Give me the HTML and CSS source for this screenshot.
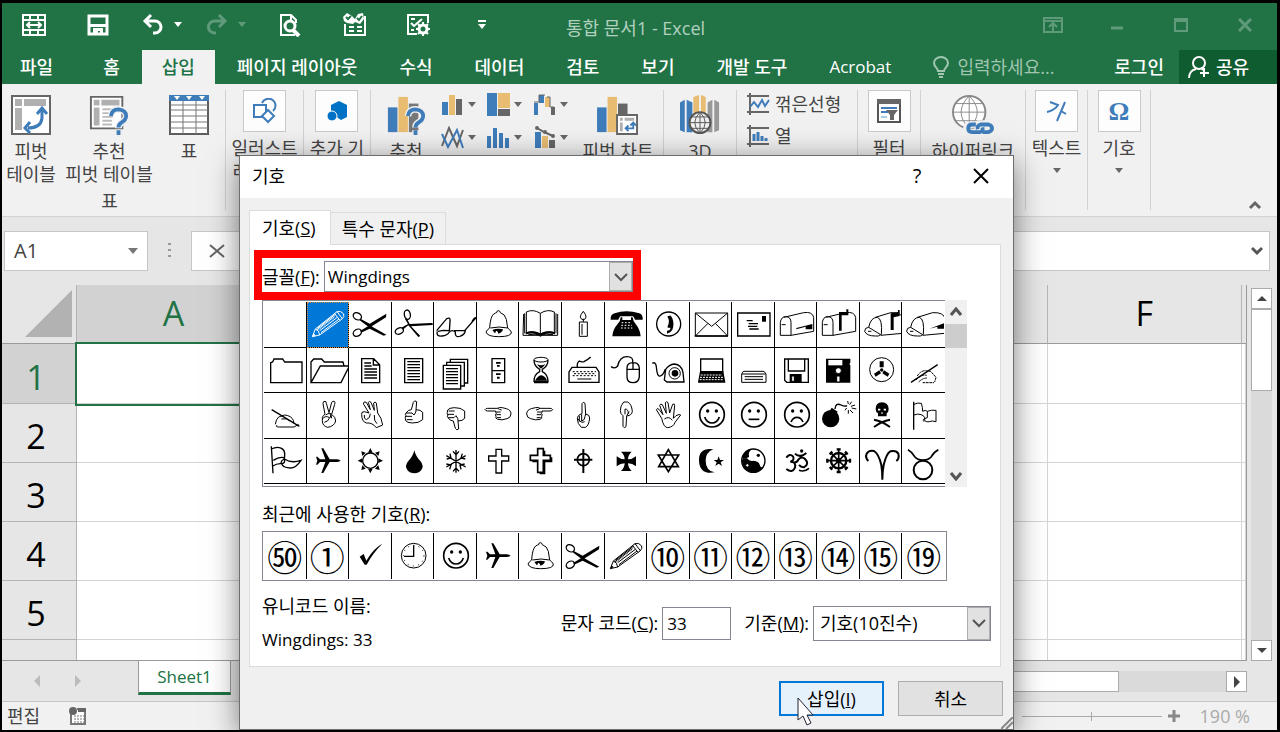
FILE: index.html
```html
<!DOCTYPE html>
<html lang="ko">
<head>
  <meta charset="UTF-8" />
  <meta name="viewport" content="width=device-width, initial-scale=1" />
  <title>통합 문서1 - Excel</title>
  <link rel="stylesheet" href="styles.css">
</head>
<body>
<div class="app">

  <!-- Title bar -->
  <header class="titlebar">
    <button class="qat" aria-label="셀 병합"><svg width="24" height="24" viewBox="0 0 24 24"><path d="M1 2h22v20H1zM1 7h22M1 17h22M8 2v5M16 2v5M8 17v5M16 17v5M5 12h14M8 9l-3 3 3 3M16 9l3 3-3 3"/></svg></button>
    <button class="qat" aria-label="저장"><svg width="22" height="22" viewBox="0 0 22 22"><path d="M2 2h18v18H2z" stroke-width="3"/><path class="f" d="M3 10h16v3H3zM6 14h10v7h-3v-4h-2v4H6z"/></svg></button>
    <button class="qat" aria-label="실행 취소"><svg width="22" height="22" viewBox="0 0 22 22"><path d="M3 7h10a6 6 0 0 1 0 12h-2M9 1L3 7l6 6" stroke-width="3"/></svg><i class="arrow"></i></button>
    <button class="qat dim" aria-label="다시 실행"><svg width="22" height="22" viewBox="0 0 22 22"><path d="M19 7H9a6 6 0 0 0-1 12h2M13 1l6 6-6 6" stroke-width="3"/></svg><i class="arrow"></i></button>
    <button class="qat" aria-label="인쇄 미리 보기"><svg width="24" height="24" viewBox="0 0 24 24"><path d="M17 22H3V2h10l5 5v3M13 2v6"/><circle cx="12" cy="13" r="5" stroke-width="3"/><path d="M15 17l6 6" stroke-width="4"/></svg></button>
    <button class="qat" aria-label="맞춤법"><svg width="26" height="26" viewBox="0 0 26 26"><path d="M4 12v11h20V4M8 15h5M8 19h5M16 15h5M16 19h5"/><path class="f" d="M2 5l4-4 5 3 3 3 3-5 5-1 1 6-4 5-5-2-2 2-6-1-3-2z"/><path d="M5 5l2 2 3-3M16 6l2 2 3-4" stroke="#217346"/></svg></button>
    <button class="qat" aria-label="양식"><svg width="25" height="24" viewBox="0 0 25 24"><path d="M11 21H2V2h20v8M5 6h4M5 10l3 3 8-7M5 17h3"/><circle cx="17" cy="16" r="4" stroke-width="3"/><path d="M17 9v3M17 20v3M10 16h3M21 16h3M12 11l2 2M20 19l2 2M22 11l-2 2M14 19l-2 2"/></svg></button>
    <button class="qat" aria-label="사용자 지정"><svg width="10" height="10" viewBox="0 0 10 10"><path d="M1 1h8"/><path class="f" d="M1 4h8L5 9z"/></svg></button>
    <h1>통합 문서1 - Excel</h1>
    <button class="qat dim" aria-label="리본 표시 옵션"><svg width="20" height="16" viewBox="0 0 20 16"><path d="M1 1h18v14H1zM1 4h18M10 14V7M6 10l4-4 4 4"/></svg></button>
    <button class="qat dim" aria-label="최소화"><svg width="14" height="14" viewBox="0 0 14 14"><path d="M1 10h12" stroke-width="3"/></svg></button>
    <button class="qat dim" aria-label="최대화"><svg width="14" height="14" viewBox="0 0 14 14"><path d="M1 1h12v12H1zM1 3h12"/></svg></button>
    <button class="qat dim" aria-label="닫기"><svg width="14" height="14" viewBox="0 0 14 14"><path d="M1 1l12 12M13 1L1 13" stroke-width="3"/></svg></button>
  </header>

  <nav class="tabs">
    <button class="file">파일</button>
    <button>홈</button>
    <button class="active">삽입</button>
    <button>페이지 레이아웃</button>
    <button>수식</button>
    <button>데이터</button>
    <button>검토</button>
    <button>보기</button>
    <button>개발 도구</button>
    <button class="latin">Acrobat</button>
    <button class="tell"><svg width="16" height="22" viewBox="0 0 16 22"><path d="M5 15c0-3-4-4-4-8a7 6 0 0 1 14 0c0 4-4 5-4 8zM5 18h6M6 21h4"/></svg>입력하세요...</button>
    <button class="login">로그인</button>
    <button class="share"><svg width="22" height="24" viewBox="0 0 22 24"><circle cx="11" cy="8" r="6"/><path d="M1 23c0-5 3-8 7-9M14 14l1 1M16 13v9M12 18h9"/></svg>공유</button>
  </nav>

  <!-- Ribbon -->
  <section class="ribbon">
    <div class="group tables">
      <div class="items">
        <button class="big"><svg width="40" height="40" viewBox="0 0 40 40"><path d="M1 1h38v38H1z" fill="#fff" stroke="#666"/><path class="gray" d="M4 4h7v7H4zM13 4h22v7H13zM4 13h7v22H4z"/><path d="M31 15v8q-1 10-14 10M26 19l5-6 5 6M19 27l-5 6 5 5" stroke="#3f7cba" stroke-width="3"/></svg><span>피벗<br>테이블</span></button>
        <button class="big wide"><svg width="40" height="42" viewBox="0 0 40 42"><path d="M1 2h33v33H1z" fill="#fff" stroke="#666"/><path class="gray" d="M4 5h6v6H4zM12 5h19v6H12zM4 13h6v19H4z"/><path d="M13 15h12M13 19h12M13 23h11M13 27h10M13 31h10" stroke="#bbb"/><path d="M22 22q1-7 8-7 8 1 8 7 0 4-5 7-3 2-3 6M30 37v5" stroke="#f0f0f0" stroke-width="7"/><path d="M22 22q1-7 8-7 8 1 8 7 0 4-5 7-3 2-3 5M30 37v5" stroke="#3f7cba" stroke-width="4"/></svg><span>추천<br>피벗 테이블</span></button>
        <button class="big"><svg width="40" height="40" viewBox="0 0 40 40"><path d="M1 1h38v38H1z" fill="#fff"/><path d="M1 5v34h38V5M14 5v34M27 5v34M1 10h38M1 15h38M1 21h38M1 27h38M1 33h38" stroke="#777" stroke-width="1"/><path d="M0 0h40v6H0z" fill="#3f7cba" stroke="none"/><path class="white" d="M5 1h6L8 5zM17 1h6l-3 4zM30 1h6l-3 4z"/></svg><span>표</span></button>
      </div>
      <div class="caption">표</div>
    </div>
    <div class="group illus">
      <button class="tile"><i class="box"><svg width="26" height="26" viewBox="0 0 26 26"><path d="M10 5a7 7 0 1 1 11 8" stroke="#3f7cba"/><path d="M2 7h12v12H2z" fill="#fff" stroke="#3f7cba"/><path d="M16 12l6 6-6 6-6-6z" fill="#fff" stroke="#3f7cba"/></svg></i><span>일러스트<br>레이션 ▾</span></button>
    </div>
    <div class="group addin">
      <button class="tile"><i class="box"><svg width="24" height="24" viewBox="0 0 24 24"><path d="M6 6l8-4 8 4v12l-6 3-6-4-4-5z" fill="#0072c6" stroke="none"/><circle cx="7" cy="17" r="5" fill="#0072c6" stroke="#fff" stroke-width="1"/></svg></i><span>추가 기<br>능 ▾</span></button>
    </div>
    <div class="group charts">
      <button class="big"><svg width="40" height="42" viewBox="0 0 40 42"><path d="M1 13h10v26H1z" fill="#3f7cba" stroke="none"/><path d="M12 2h10v37H12z" fill="#e8bd72" stroke="none"/><path d="M23 9h10v30H23z" fill="#777" stroke="none"/><path d="M22 22q1-7 8-7 8 1 8 7 0 4-5 7-3 2-3 5M30 37v5" stroke="#f0f0f0" stroke-width="7"/><path d="M22 22q1-7 8-7 8 1 8 7 0 4-5 7-3 2-3 5M30 37v5" stroke="#3f7cba" stroke-width="4"/></svg><span>추천<br>차트</span></button>
      <div class="minis">
        <button aria-label="세로 막대형"><svg width="24" height="24" viewBox="0 0 24 24"><path class="blue" d="M1 9h6v13H1z"/><path class="tan" d="M8 2h6v20H8z"/><path class="dark" d="M15 6h6v16h-6z"/></svg><i class="arrow"></i></button>
        <button aria-label="계층 구조"><svg width="24" height="24" viewBox="0 0 24 24"><path class="blue" d="M0 0h10v23H0z"/><path class="tan" d="M11 0h12v15H11z"/><path class="dark" d="M11 16h12v7H11z"/></svg><i class="arrow"></i></button>
        <button aria-label="폭포"><svg width="24" height="24" viewBox="0 0 24 24"><path class="blue" d="M1 10h4v12H1zM6 2h5v8H6z"/><path class="tan" d="M12 4h5v10h-5z"/><path class="dark" d="M18 14h4v8h-4z"/><path d="M1 9h5V2h6M14 4h3v10h4" stroke="#666" stroke-width="1"/></svg><i class="arrow"></i></button>
        <button aria-label="꺾은선형"><svg width="24" height="24" viewBox="0 0 24 24"><path d="M1 20L8 2l8 18 6-16" stroke="#666"/><path d="M1 8l6 13 9-17 6 18" stroke="#3f7cba"/></svg><i class="arrow"></i></button>
        <button aria-label="통계"><svg width="24" height="24" viewBox="0 0 24 24"><path class="blue" d="M0 10h4v12H0zM6 2h4v20H6zM12 7h4v15h-4zM18 12h4v10h-4z"/></svg><i class="arrow"></i></button>
        <button aria-label="콤보"><svg width="24" height="24" viewBox="0 0 24 24"><path class="blue" d="M2 6h6v16H2z"/><path class="tan" d="M9 10h6v12H9z"/><path class="dark" d="M16 14h6v8h-6z"/><path d="M4 2l7 4 9 4" stroke="#666"/><circle class="dark" cx="4" cy="2" r="2"/><circle class="dark" cx="12" cy="6" r="2"/><circle class="dark" cx="20" cy="10" r="2"/></svg><i class="arrow"></i></button>
      </div>
      <button class="big pchart"><svg width="44" height="42" viewBox="0 0 44 42"><path class="blue" d="M0 13h10v26H0z"/><path class="tan" d="M11 2h10v37H11z"/><path class="dark" d="M22 9h10v12H22z"/><path d="M21 21h21v20H21z" fill="#fff" stroke="#666"/><path class="gray" d="M24 24h3v3h-3zM29 24h10v3H29zM24 29h3v9h-3z"/><path d="M38 30v5h-7M35 32l3-3 3 3M33 32l-3 3 3 3" stroke="#3f7cba"/></svg><span>피벗 차트<br>▾</span></button>
    </div>
    <div class="group map">
      <button class="big"><svg width="42" height="42" viewBox="0 0 42 42"><path d="M0 8l5-3v34l-5-2zM7 5l6 3v31H7z" fill="#3f7cba" stroke="none"/><path d="M14 2l6-2v20h-6zM22 0l5 2v20h-5z" fill="#e8bd72" stroke="none"/><path d="M29 8l5-3v34h-5zM36 5l5 3v29l-5 2z" fill="#999" stroke="none"/><circle cx="21" cy="29" r="11" fill="#f0f0f0" stroke="#555"/><path d="M10 29h22M21 18v22M12 23h18M12 35h18M21 18q-11 11 0 22M21 18q11 11 0 22" stroke="#555" stroke-width="1"/></svg><span>3D<br>맵 ▾</span></button>
    </div>
    <div class="group spark">
      <button><svg width="24" height="22" viewBox="0 0 24 22"><path d="M1 3h22M1 19h22M4 0v22" stroke="#666"/><path d="M4 14l4-5 4 5 4-7 3 6 4-6" stroke="#3f7cba"/></svg>꺾은선형</button>
      <button><svg width="24" height="22" viewBox="0 0 24 22"><path d="M1 3h22M1 19h22M4 0v22" stroke="#666"/><path d="M8 16V9M12 16V7M16 16v-5M20 16v-3" stroke="#3f7cba" stroke-width="3"/></svg>열</button>
    </div>
    <div class="group filter">
      <button class="tile"><i class="box"><svg width="24" height="24" viewBox="0 0 24 24"><path d="M1 1h22v22H1z" fill="#fff" stroke="#555"/><path class="dark" d="M0 0h24v5H0z"/><path d="M4 9h16M4 13h7" stroke="#3f7cba"/><path d="M4 18h6" stroke="#a8cbe8"/><path class="dark" d="M9 11h12l-4 5v5h-4v-5z"/></svg></i><span>필터<br>▾</span></button>
    </div>
    <div class="group link">
      <button class="big"><svg width="46" height="42" viewBox="0 0 46 42"><circle cx="19" cy="18" r="17" fill="#fff" stroke="#888"/><path d="M2 18h34M19 1v34M5 9h28M5 27h28M19 1q-17 17 0 34M19 1q17 17 0 34" stroke="#888" stroke-width="1"/><path d="M24 31h8q3 3 0 8h-8q-8 0-8-4t8-4M34 38h4q5-1 5-4t-5-4h-9q-3 2 0 5" stroke="#f0f0f0" stroke-width="7"/><path d="M26 31h-4q-4 0-4 4t4 4h8q4-1 3-5M33 39h6q4-1 4-4t-4-4h-8q-4 1-3 5" stroke="#3f7cba" stroke-width="4"/></svg><span>하이퍼링크</span></button>
    </div>
    <div class="group text">
      <button class="tile"><i class="box"><svg width="24" height="24" viewBox="0 0 24 24"><path d="M5 3l8 3q-3 5-11 7M20 3l-8 19M16 12l5 3" stroke="#3f7cba"/></svg></i><span>텍스트</span><i class="arrow"></i></button>
    </div>
    <div class="group symbol">
      <button class="tile"><i class="box omega">Ω</i><span>기호</span><i class="arrow"></i></button>
    </div>
    <button class="collapse" aria-label="리본 축소"><svg width="14" height="10" viewBox="0 0 14 10"><path d="M2 8l5-5 5 5" stroke="#666" stroke-width="3"/></svg></button>
  </section>

  <!-- Formula bar -->
  <div class="formulabar">
    <button class="namebox">A1<i class="arrow"></i></button>
    <span class="dots"></span>
    <div class="formula">
      <button aria-label="취소"><svg width="16" height="14" viewBox="0 0 16 14"><path d="M1 1l14 12M15 1L1 13" stroke="#666"/></svg></button>
      <input type="text" aria-label="수식 입력줄">
      <button aria-label="수식 입력줄 확장"><svg width="12" height="10" viewBox="0 0 12 10"><path d="M1 2l5 5 5-5" stroke="#555" stroke-width="3"/></svg></button>
    </div>
  </div>

  <!-- Sheet -->
  <main class="sheet">
    <div class="cells">
      <table>
        <thead>
          <tr><th class="corner"><svg width="47" height="47" viewBox="0 0 47 47"><path d="M47 0v47H0z" fill="#b2b2b2" stroke="none"/></svg></th><th class="on">A</th><th></th><th></th><th></th><th></th><th>F</th><th class="rest"></th></tr>
        </thead>
        <tbody>
          <tr class="first"><th class="on">1</th><td class="current"></td><td></td><td></td><td></td><td></td><td></td><td></td></tr>
          <tr><th>2</th><td></td><td></td><td></td><td></td><td></td><td></td><td></td></tr>
          <tr><th>3</th><td></td><td></td><td></td><td></td><td></td><td></td><td></td></tr>
          <tr><th>4</th><td></td><td></td><td></td><td></td><td></td><td></td><td></td></tr>
          <tr><th>5</th><td></td><td></td><td></td><td></td><td></td><td></td><td></td></tr>
          <tr><th>6</th><td></td><td></td><td></td><td></td><td></td><td></td><td></td></tr>
        </tbody>
      </table>
    </div>
    <div class="vscroll">
      <button aria-label="위로"><i class="arrow up"></i></button>
      <div class="track"><div class="thumb"></div></div>
      <button aria-label="아래로"><i class="arrow"></i></button>
    </div>
  </main>

  <div class="sheettabs">
    <div class="nav"><i class="arrow left"></i><i class="arrow right"></i></div>
    <button class="sheettab">Sheet1</button>
    <div class="hscroll">
      <div class="track"><div class="thumb"></div></div>
      <button aria-label="오른쪽으로"><i class="arrow right"></i></button>
    </div>
  </div>

  <footer class="status">
    <span>편집</span>
    <svg width="20" height="20" viewBox="0 0 20 20"><path d="M3 7v11h14V3H9" stroke="#777" fill="#fff"/><circle class="dark" cx="5" cy="5" r="4"/><path class="dark" d="M10 2h8v4h-8z"/><path d="M6 10h10M6 13h10M6 16h10" stroke="#777" stroke-width="1" stroke-dasharray="2 1"/></svg>
    <input type="range" class="zoom" aria-label="확대/축소" min="10" max="400" value="190">
    <svg width="12" height="12" viewBox="0 0 12 12"><path d="M6 0v12M0 6h12" stroke="#888" stroke-width="3"/></svg>
    <span class="percent">190 %</span>
  </footer>

  <!-- Symbol dialog -->
  <div class="dialog" role="dialog" aria-labelledby="dialogTitle">
    <div class="dialog-title">
      <h2 id="dialogTitle">기호</h2>
      <button class="help" aria-label="도움말">?</button>
      <button aria-label="닫기"><svg width="16" height="16" viewBox="0 0 16 16"><path d="M1 1l14 14M15 1L1 15" stroke="#000"/></svg></button>
    </div>
    <div class="dialog-tabs">
      <button class="active">기호(<u>S</u>)</button>
      <button>특수 문자(<u>P</u>)</button>
    </div>
    <div class="panel">
      <div class="font-row">
        <label for="font">글꼴(<u>F</u>):</label>
        <div class="select latin">
          <select id="font"><option>Wingdings</option></select>
          <i class="drop"><svg width="14" height="10" viewBox="0 0 14 10"><path d="M1 2l6 6 6-6"/></svg></i>
        </div>
      </div>

      <div class="picker">
        <div class="symbols" id="symbolGrid"></div>
        <div class="scroll">
          <button aria-label="위로"><svg width="12" height="10" viewBox="0 0 12 10"><path d="M1 8l5-6 5 6" stroke-width="3"/></svg></button>
          <div class="thumb"></div>
          <button class="down" aria-label="아래로"><svg width="12" height="10" viewBox="0 0 12 10"><path d="M1 2l5 6 5-6" stroke-width="3"/></svg></button>
        </div>
      </div>

      <div class="recent-label">최근에 사용한 기호(<u>R</u>):</div>
      <div class="recent" id="recentGrid"></div>

      <div class="info">
        <div class="name">
          <div>유니코드 이름:</div>
          <div class="latin">Wingdings: 33</div>
        </div>
        <label for="code">문자 코드(<u>C</u>):</label>
        <input type="text" id="code" class="latin" value="33">
        <label for="base">기준(<u>M</u>):</label>
        <div class="select base">
          <select id="base"><option>기호(10진수)</option></select>
          <i class="drop"><svg width="14" height="10" viewBox="0 0 14 10"><path d="M1 2l6 6 6-6"/></svg></i>
        </div>
      </div>
    </div>
    <div class="actions">
      <button class="primary">삽입(<u>I</u>)</button>
      <button>취소</button>
    </div>
    <svg class="grip" width="12" height="12" viewBox="0 0 12 12"><path d="M0 12L12 0M5 12l7-7" stroke="#888"/></svg>
    <svg class="cursor" width="19" height="30" viewBox="0 0 19 30"><path d="M2 1v22l5-4 4 9 4-2-4-8h6z" fill="#fff" stroke="#223" stroke-width="1"/></svg>
  </div>
</div>

<script>
  const hand = '<path d="M24 50q2-4 8-4h30q4-4 14-2l12 3q14 4 14 16-1 12-12 14-16 6-28 2-8-3-5-9-4-5 1-9-3-3-2-7H32q-6 0-8-4z"/><path d="M58 65h14M60 74h12M62 46q6 4 12 5M57 57h14"/>';
  const thumb = '<path d="M42 60q6-10 16-10l6-22q4-8 10-2l-2 24q14 0 20 8v22q-10 6-14 8-20 4-30 0-10-4-8-12-2-4 2-8 -4-4 0-8zM42 60h18l6 6M40 70h20M44 80h18M72 50q2 6-6 16"/>';
  const box = '<path d="M16 100V62q2-18 16-18 16 0 16 18v38zM26 46l60-14q26-4 30 14v42L48 100M20 68h12"/>';
  const openBox = '<path d="M14 88q0-12 12-12l36 22q-6 6-16 4-26 0-32-14zM26 76q6-30 26-30 16 4 12 52M46 46l46-14q34-2 38 20M62 100l66-6M24 88h10"/>';
  const scissors = '<ellipse cx="25" cy="43" rx="13" ry="10" transform="rotate(30 25 43)" stroke-width="4"/><ellipse cx="25" cy="92" rx="13" ry="10" transform="rotate(-30 25 92)" stroke-width="4"/><path class="f" d="M34 50l28 15 50-30-1 11-45 28-6 2-28-21zM34 86l28-16 50 28-8 3-42-21-26 12z"/>';
  const face = '<circle cx="66" cy="65" r="37" stroke-width="5"/><circle class="f" cx="53" cy="54" r="5"/><circle class="f" cx="79" cy="54" r="5"/>';
  const cross = 'M57 31h17v20h21v15H74v36H57V66H35V51h22z';

  // every drawing uses a 126 x 135 cell
  const shapes = {
    blank: '',
    pencil: '<path d="M16 104l9-23 65-52q12-4 20 7 3 8-5 15l-67 48zM25 81q12 4 13 18M83 35l16 20M90 29l16 21M32 78l54-42M38 86l53-40M42 92l54-41"/><path class="f" d="M16 104l4-10 6 6z"/><path d="M30 84l52-41" stroke-width="6" stroke-dasharray="3 2"/>',
    scissors: scissors,
    cutting: '<ellipse cx="46" cy="38" rx="9" ry="14" transform="rotate(-10 46 38)" stroke-width="4"/><ellipse cx="22" cy="87" rx="13" ry="9" transform="rotate(-25 22 87)" stroke-width="4"/><path class="f" d="M45 50l8 16 64-3q9 1 4 6l-64 4 28 29-6 3-30-35-17 13-4-6 20-11-9-15z"/>',
    glasses: '<path d="M10 88q-4 16 14 14 16-1 22-12 8-8 18 0v6q2 12 16 6 12-4 14-16H60M8 86l30-36q12-6 10 8L46 88M92 86l34-39q-6 0-12 12M12 88l16-3 20 1" stroke-width="4"/>',
    bell: '<path d="M27 90q4-8 11-12 2-34 12-42 6-4 9-4 0-6 5-6t6 6q14 4 18 20l4 26q6 4 11 12 2 14-38 14-34 0-38-14zM40 78q26-6 52 0"/><path class="f" d="M46 84q14-6 32-2-2 10-14 13 0-8-7-9 0 7-4 7z"/>',
    book: '<path d="M14 36l-2 64h48l4 3 5-3h47V36M22 30v62q20-8 42 4 22-12 42-4V30q-20-10-42 4Q42 20 22 30zM64 34v62M28 98q22-4 36 2 14-6 38-2M17 34v60M111 34v60"/><path d="M20 94q26-6 44 4 20-10 44-4" stroke-width="6"/>',
    candle: '<path d="M52 60h24v43H52zM64 60V50M64 28q-18 20 0 26 16-6 0-26M60 66v32"/>',
    phone: '<path class="f" d="M17 49q0-12 12-15 34-12 74 0 10 3 10 15v4H90q-3-8-6-10H46q-4 4-6 10H17zM47 46h5v8h26v-8h5q1 12 9 20 13 16 15 37H22q2-22 16-37 9-9 9-20z"/><path d="M50 62h30M49 70h32M48 78h34" stroke="#fff" stroke-dasharray="5 5"/>',
    dial: '<circle cx="65" cy="66" r="36" stroke-width="4"/><path class="f" d="M60 37q12 2 16 12 7 18 0 34-5 10-16 12v-9q9 0 10-5v-4h-8v-5q8-14 0-26v-4h7q-1-4-9-5z"/>',
    mail: '<path d="M16 33h97v69H16zM16 33l49 40 48-40M16 102l38-38M113 102L76 64" /><path d="M14 102h100" stroke-width="4"/>',
    letter: '<path d="M17 33h97v69H17zM44 56h18M50 65h28M48 73h28M52 81h28" stroke-width="4"/><path class="f" d="M90 42h12v17H90z"/>',
    mailbox: box + '<path class="f" d="M64 78l48-12v16H92V74l-28 8z"/>',
    mailflag: box + '<path class="f" d="M66 86V30h22v-8h6v18H74v46z"/>',
    openflag: openBox + '<path class="f" d="M92 84V34l22-4v-6h5v18l-18 4v38z"/>',
    openbox: openBox + '<path class="f" d="M82 80l48-18v18H106V74z"/>',

    folder: '<path d="M20 104V44l6-2 4-9h26l6 9h52v62z" stroke-width="4"/>',
    openfolder: '<path d="M12 104V42l8-9h24l8 9h56l3 12M12 104l28-50h87l-25 50z" stroke-width="4"/>',
    file: '<path d="M38 32h36l18 18v54H38zM73 32v19h19M46 45h20M46 54h22M46 63h38M46 72h38M46 81h38M46 90h38" stroke-width="4"/>',
    page: '<path d="M38 32h54v72H38zM46 41h38M46 50h38M46 59h38M46 68h38M46 77h38M46 86h38M46 95h38" stroke-width="4"/>',
    pages: '<path d="M28 52h52v71H28zM38 52V43h53v71H80M49 43v-9h52v71H91M36 62h36M36 71h36M36 80h36M36 89h36M36 98h36M36 107h36" stroke-width="4"/>',
    cabinet: '<path d="M45 32h38v72H45zM45 68h38" stroke-width="4"/><path class="f" d="M57 42h14v5H57zM60 51h8v5h-8zM57 76h14v5H57zM60 86h8v6h-8z"/>',
    hourglass: '<ellipse cx="66" cy="35" rx="21" ry="7"/><path d="M45 36q0 18 17 28v7q-17 8-17 29h42q0-20-17-29v-7q17-10 17-28M45 104h43" stroke-width="4"/><path class="f" d="M54 48q12 8 25 0-4 8-13 14-8-6-12-14zM48 98q8-14 18-16 14 2 18 16z"/>',
    keyboard: '<path d="M30 58h72l9 14v31H21V72zM46 57q-2-12 6-18 6 4 14 2 14-8 20-14" stroke-width="4"/><path d="M32 71h70M36 77h64M32 83h70" stroke-dasharray="6 5"/><path d="M46 93h42"/>',
    mouse: '<path d="M66 60q0-16 18-16t19 16v26q-2 18-18 18-19 0-19-18zM66 64h37M84 44v20M18 56q12 8 20-2 6-28 28-28 20 0 17 18" stroke-width="4"/>',
    trackball: '<path d="M16 46q10-6 12 10 2 32 12 28 10-4 14-20M52 96l4-32q10-14 26-16 22 2 26 26l3 28H60z" stroke-width="4"/><circle cx="83" cy="76" r="17"/><circle class="f" cx="84" cy="76" r="10"/>',
    computer: '<path d="M32 33h66v38H32z" stroke-width="4"/><path class="f" d="M30 70h70l6 32v2H24v-2z"/><path d="M32 81h64M30 88h70M29 95h72" stroke="#fff" stroke-dasharray="6 3"/>',
    drive: '<path d="M34 70h62l6 8v25H29V78zM30 78h70M38 86h55M38 94h55"/>',
    floppy: '<path d="M29 33h71v70H35l-6-6zM40 33v36h49V33" stroke-width="4"/><path class="f" d="M44 78h36v26H44z"/><path d="M50 84h8v16h-8z" fill="#fff"/>',
    disk: '<path class="f" d="M27 32h73v12l-3 4 3 4v52H27z"/><path d="M34 36h42v16H34z" fill="#fff" stroke="none"/><circle cx="64" cy="68" r="9" fill="#fff"/><path d="M59 84h10v18H59z" fill="#fff"/>',
    tape: '<circle cx="65" cy="65" r="36"/><path class="f" d="M59 40h12v18H59zM42 77l16-10 5 9-16 10zM88 77l-16-10-5 9 16 10z"/><circle class="f" cx="65" cy="66" r="5"/>',
    write: '<path d="M27 103l80-53" stroke-width="4"/><path d="M46 84q8-14 22-16l18 2 16 18-4 14M42 96q16-18 32-14M50 102q12-12 26-12M62 104h34" stroke-dasharray="8 2"/>',

    writeleft: '<path d="M23 50l83 50" stroke-width="4"/><path d="M34 94q2-16 10-22l18-6q20 2 26 16l2 10M40 96q-8 6 6 6h44l14-8M52 78q16-4 26 6"/>',
    victory: '<path d="M46 74q2-8 8-10L48 32q0-8 6-7 4 0 4 6l8 28 8-31q4-6 9-2 2 3 0 8l-9 30q12 8 12 20-4 16-24 19-16-4-16-20zM46 78q10-12 22-4-4 12-16 14M56 66q6-6 16-4l-2 12M72 64l2 12"/>',
    ok: '<path d="M38 64q-2-8 8-8l14 4L44 34q-2-10 8-6l12 22-6-22q2-6 8 0l10 24-2-22q4-6 8 0l4 30q12 14 15 36l-19 8q-12-16-30-14-14-4-14-26zM46 66q-2 12 6 14 12-4 12-18M76 66q-2 18 8 26"/>',
    thumbup: thumb,
    thumbdown: '<g transform="matrix(1 0 0 -1 0 134)">' + thumb + '</g>',
    left: hand,
    right: '<g transform="matrix(-1 0 0 1 125 0)">' + hand + '</g>',
    up: '<path d="M60 62V32q4-8 9-1l2 32q12 2 12 12-2 22-12 28H58Q46 92 46 78q0-12 14-16zM52 68v18M59 64v20q10-2 10-14l2-7M48 78q10 14 20 8"/>',
    down: '<path d="M54 68v32q4 8 9 1l2-32q16-2 17-14-2-22-14-28H56Q46 38 46 52q0 12 8 16zM60 64V48q10 0 10 14M65 68l8-12"/>',
    palm: '<path d="M44 76L28 50q2-6 8-1l12 16-10-28q2-6 8-2l12 26-3-32q4-6 8 0l5 31 9-26q6-4 6 4l-4 38 8-8q12-6 14-2L84 88q-4 14-22 16-12 0-18-28zM52 78q14-10 24 4"/>',
    smile: face + '<path d="M44 72q6 18 22 18t22-18" stroke-width="5"/>',
    neutral: face + '<path d="M50 79h32" stroke-width="5"/>',
    frown: face + '<path d="M48 87q6-14 18-14t18 14" stroke-width="5"/>',
    bomb: '<circle class="f" cx="41" cy="77" r="26"/><path class="f" d="M44 44l18 12-8 10-16-12z"/><path d="M54 48q2-20 18-12 12 6 18 2" stroke-width="4"/><path d="M92 24l2 9M104 26l-6 9M114 36l-12 4M118 48l-14-3M108 60l-9-9M94 62v-11M84 52l5-7"/>',
    skull: '<path class="f" d="M47 48q0-20 19-20t20 20q0 10-6 13v9H54v-9q-7-3-7-13z"/><path d="M54 50h7M71 50h7M64 60h4" stroke="#fff" stroke-width="5"/><path d="M42 80q24 4 48 22M90 80q-24 4-48 22" stroke-width="6"/>',
    flag: '<path d="M36 34q12-6 22-3 4 12 4 24 8-6 14 0 12-5 26-3v34q-12-4-20 0-8 2-14-3V74q-2-8-14-10-8-2-18 2M66 86q-8-8 10-12V55"/><path d="M35 26v84" stroke-width="4"/>',

    pennant: '<path d="M22 22l5 81M22 30q16-8 28-3 14 5 12 24l-1 9q22 14 50 4-18 28-40 22-14-2-18-12 8 0 9-8l-2-10q-14-4-32 8M53 74q-12-2-27 7M61 60q-10 4-10 14" stroke-width="4"/>',
    plane: '<path class="f" d="M101 65q-6-4-12-4H68L49 28h-6l12 33H39l-8-8h-4l4 12-4 12h4l8-8h16l-12 33h6l19-33h21q6 0 12-4z"/>',
    sun: '<circle cx="64" cy="65" r="23" stroke-width="4"/><path class="f" d="M57 41h14l-7-14zM57 89h14l-7 14zM40 58v14l-14-7zM88 58v14l14-7zM40 51l10-10-13-4zM78 41l10 10 4-14zM40 79l10 10-13 4zM78 89l10-10 4 14z"/>',
    drop: '<path class="f" d="M67 34q4 18 18 32 12 14 3 27-8 10-21 10t-21-10q-9-13 3-27 14-14 18-32z"/>',
    snow: '<path d="M66 33v68M37 50l58 34M95 50L37 84M57 37l9 10 9-10M57 97l9-10 9 10M38 60l13-3-3-13M81 91l-3-13 14-3M94 60l-13-3 4-13M47 91l4-13-14-3" stroke-width="4"/>',
    cross: '<path d="' + cross + '" stroke-width="4"/>',
    shadowcross: '<path class="f" d="' + cross + '" transform="translate(5 4)"/><path d="' + cross + '" fill="#fff" stroke-width="5" transform="translate(-1 -2)"/>',
    celtic: '<circle cx="64" cy="62" r="18" stroke-width="5"/><path d="M64 30v72M36 62h55" stroke-width="6"/>',
    maltese: '<path class="f" d="M48 38h32q-11 10-11 23 13 0 24-9v30q-11-9-24-9 0 13 11 23H48q11-10 11-23-13 0-24 9V52q11 9 24 9 0-13-11-23z"/>',
    david: '<path d="M64 32l30 51H35zM64 98L34 48h61z" stroke-width="5"/>',
    crescent: '<path class="f" d="M70 31q-44-6-43 34 2 43 47 35-27-5-27-35 0-25 23-34zM86 52l4 11h12l-10 7 4 11-10-7-10 7 4-11-9-7h11z"/>',
    yinyang: '<circle cx="64" cy="65" r="35" stroke-width="4"/><path class="f" d="M64 100a35 35 0 0 1-34-38q6-6 15-4 8 10 19 7 17 2 19 12t12 8q-10 15-31 15z"/><path class="f" d="M31 60q0-26 30-30-14 8-10 24-8 6-20 6z"/><circle class="f" cx="79" cy="49" r="5"/><circle cx="46" cy="79" r="5" fill="#fff"/>',
    om: '<path d="M34 56q10-14 20-4 6 12-8 16 18 0 14 18-8 18-26 4M56 70q10 2 14-8 10-12 20-2 14 14-2 24-8 2-16-6M60 44q16 14 34-2" stroke-width="6"/><path d="M72 94q16 6 30-6" stroke-width="5"/><circle class="f" cx="80" cy="36" r="5"/>',
    wheel: '<circle cx="65" cy="65" r="23" stroke-width="7"/><circle class="f" cx="65" cy="65" r="8"/><path d="M65 29v72M29 65h72M40 40l50 50M90 40L40 90" stroke-width="5"/><path d="M59 31h12M59 99h12M31 59v12M99 59v12M38 46l8-8M84 38l8 8M38 84l8 8M92 84l-8 8" stroke-width="7"/>',
    aries: '<path d="M25 66q-10-10-5-22 7-12 22-8 14 8 22 42 3 18 3 44 0-24 4-44 8-34 20-41 18-4 24 7 4 14-6 22" stroke-width="6"/>',
    taurus: '<path d="M18 32q14 8 20 21 8 10 25 10t25-10q6-13 21-21" stroke-width="5"/><circle cx="63" cy="93" r="28" stroke-width="6"/>',
    check: '<path class="f" d="M32 68l12-8 8 20q22-38 48-51-30 30-47 63h-6z"/>',
    clock: '<circle cx="65" cy="65" r="37"/><circle cx="65" cy="65" r="31" stroke-dasharray="3 13"/><path d="M65 34v33H36" stroke-width="4"/>'
  };

  const recent = ['㊿', '①', 'check', 'clock', 'smile', 'plane', 'bell', 'scissors', 'pencil', '⑩', '⑪', '⑫', '⑬', '⑭', '⑮', '⑲'];
  const grid = Object.keys(shapes).slice(0, 64);

  function addCell(parent, name) {
    const cell = document.createElement('button');
    cell.className = 'cell';
    if (name in shapes) {
      cell.setAttribute('aria-label', name);
      cell.innerHTML = `<svg viewBox="0 0 126 135">${shapes[name]}</svg>`;
    } else {
      cell.textContent = name;
    }
    parent.appendChild(cell);
    return cell;
  }

  const symbolGrid = document.getElementById('symbolGrid');
  const recentGrid = document.getElementById('recentGrid');
  grid.forEach(name => addCell(symbolGrid, name));
  recent.forEach(name => addCell(recentGrid, name));
  symbolGrid.children[1].classList.add('selected');

  symbolGrid.onclick = e => {
    const cell = e.target.closest('.cell');
    if (!cell) return;
    symbolGrid.querySelector('.selected').classList.remove('selected');
    cell.classList.add('selected');
  };
</script>
</body>
</html>
```
FILE: styles.css
```css
* {
  box-sizing: border-box;
}
body {
  margin: 0;
  font-family: "Open Sans", "Noto Sans CJK KR", sans-serif;
  font-size: 18px;
  line-height: 24px;
  color: #444;
}
button, input, select {
  font: inherit;
  color: inherit;
  margin: 0;
  padding: 0;
  border: none;
  background: none;
}
h1, h2 {
  margin: 0;
  font-size: 18px;
  font-weight: 400;
}
i {
  font-style: normal;
}
svg {
  display: block;
  flex: none;
  fill: none;
  stroke: currentColor;
  stroke-width: 2;
}
.f { fill: currentColor; stroke: none; }
.blue { fill: #3f7cba; stroke: none; }
.tan { fill: #e8bd72; stroke: none; }
.dark { fill: #666; stroke: none; }
.gray { fill: #b0b0b0; stroke: none; }
.white { fill: #fff; stroke: none; }

.latin {
  font-size: 17px;
}
.arrow {
  flex: none;
  border: 4px solid transparent;
  border-top: 5px solid currentColor;
  border-bottom: none;
}
.arrow.up {
  border-top: none;
  border-bottom: 5px solid currentColor;
}
.arrow.left {
  border: 6px solid transparent;
  border-right-color: currentColor;
  border-left: none;
}
.arrow.right {
  border: 6px solid transparent;
  border-left-color: currentColor;
  border-right: none;
}

.app {
  position: relative;
  display: flex;
  flex-direction: column;
  height: 100vh;
  overflow: hidden;
  border: 3px solid #000;
  border-width: 3px 3px 2px 2px;
  background: #e6e6e6;
}

/* Title bar */
.titlebar {
  display: flex;
  align-items: center;
  flex: none;
  height: 47px;
  padding-bottom: 4px;
  background: #217346;
  color: #fff;
}
.qat {
  display: flex;
  align-items: center;
  justify-content: center;
  gap: 10px;
  width: 64px;
  height: 43px;
}
.dim {
  color: #5f9a7a;
}
.titlebar h1 {
  flex: 1;
  padding: 6px 0 0 52px;
  color: #b1d0bf;
}

.tabs {
  display: flex;
  flex: none;
  gap: 2px;
  height: 34px;
  background: #217346;
  color: #fff;
  font-weight: 500;
}
.tabs button {
  padding: 0 20px;
  white-space: nowrap;
}
.tabs .file {
  padding: 0 28px 0 18px;
}
.tabs .active {
  background: #f1f1f1;
  color: #217346;
}
.tabs .tell {
  display: flex;
  align-items: center;
  gap: 8px;
  color: #a0c5b0;
  font-weight: 400;
}
.tabs .login {
  margin-left: auto;
  padding: 0 13px;
}
.tabs .share {
  display: flex;
  align-items: center;
  gap: 6px;
  width: 98px;
  padding: 0 9px;
  background: #0e5c2f;
}

/* Ribbon */
.ribbon {
  position: relative;
  display: flex;
  flex: none;
  height: 133px;
  padding: 6px 0;
  background: #f1f1f1;
  border-bottom: 1px solid #d2d2d2;
  line-height: 23px;
}
.group {
  flex: none;
  display: flex;
  justify-content: center;
  border-right: 1px solid #d2d2d2;
}
.ribbon .arrow {
  color: #666;
}
.tables { width: 224px; flex-direction: column; }
.illus { width: 78px; }
.addin { width: 67px; }
.charts { width: 293px; }
.map { width: 73px; }
.spark { width: 121px; }
.filter { width: 63px; }
.link { width: 105px; }
.text { width: 62px; }
.symbol { width: 63px; }
.items {
  display: flex;
  flex: 1;
  padding-right: 16px;
}
.caption {
  text-align: center;
  line-height: 18px;
  padding-right: 8px;
}
.big, .tile {
  display: flex;
  flex-direction: column;
  align-items: center;
  white-space: nowrap;
}
.big {
  width: 58px;
  padding-top: 5px;
}
.big svg {
  margin-bottom: 5px;
  height: 40px;
  overflow: visible;
}
.items .wide {
  width: 98px;
}
.items .big:last-child {
  width: 40px;
  margin-left: auto;
}
.tile .box {
  display: flex;
  align-items: center;
  justify-content: center;
  width: 43px;
  height: 42px;
  margin-bottom: 5px;
  border: 1px solid #c9c9c9;
  background: #fdfdfd;
}
.tile .arrow {
  margin-top: 8px;
}
.omega {
  color: #3f7cba;
  font-family: "Liberation Serif", serif;
  font-size: 26px;
  font-weight: 700;
}
.charts .pchart {
  width: 78px;
}
.minis {
  display: grid;
  grid-template-columns: repeat(3, 46px);
  grid-auto-rows: 33px;
  margin: -2px 0 0 6px;
}
.minis button {
  display: flex;
  align-items: center;
  gap: 3px;
}
.spark {
  flex-direction: column;
  justify-content: flex-start;
  padding-left: 9px;
}
.spark button {
  display: flex;
  align-items: center;
  gap: 5px;
  height: 32px;
}
.spark button:first-child {
  margin-top: -2px;
}
.collapse {
  margin: auto 15px 0 auto;
}

/* Formula bar */
.formulabar {
  display: flex;
  flex: none;
  height: 68px;
  padding: 14px 7px 14px 2px;
}
.namebox {
  display: flex;
  align-items: center;
  justify-content: space-between;
  width: 144px;
  padding: 0 9px;
  border: 1px solid #c6c6c6;
  background: #fff;
  font-size: 20px;
}
.namebox .arrow {
  border-width: 6px 5px 0;
  color: #777;
}
.dots {
  width: 3px;
  margin: 12px 20px;
  background: repeating-linear-gradient(#999 0 2px, transparent 2px 6px);
}
.formula {
  display: flex;
  flex: 1;
  border: 1px solid #c6c6c6;
  background: #fff;
}
.formula input {
  flex: 1;
}
.formula button {
  padding: 0 6px;
}
.formula button:first-child {
  padding: 0 17px;
}

/* Sheet */
.sheet {
  display: flex;
  flex: 1;
  min-height: 0;
}
.cells {
  flex: 1;
  overflow: hidden;
  border-right: 1px solid #9b9b9b;
  border-bottom: 1px solid #9b9b9b;
}
table {
  width: 100%;
  table-layout: fixed;
  border-spacing: 0;
  font-size: 34px;
  line-height: 40px;
  color: #000;
}
th, td {
  height: 59px;
  padding: 0;
  border: 0 solid #d4d4d4;
  border-width: 0 1px 1px 0;
}
th {
  font-weight: 400;
  background: #e6e6e6;
  border-color: #b4b4b4;
}
tbody th {
  padding: 6px 6px 0 0;
}
.first th {
  height: 60px;
}
thead th {
  padding-bottom: 2px;
  border-bottom-color: #9b9b9b;
}
td {
  background: #fff;
}
th.corner {
  width: 75px;
}
th.rest {
  width: 4px;
  border-right: none;
}
.corner svg {
  margin-left: auto;
  margin-right: 4px;
}
.on {
  background: #d2d2d2;
  color: #217346;
}
.current {
  outline: 2px solid #217346;
}
.vscroll {
  display: flex;
  flex-direction: column;
  width: 30px;
  padding: 3px 5px 0 4px;
}
.vscroll button, .hscroll button {
  display: flex;
  align-items: center;
  justify-content: center;
  flex: none;
  width: 21px;
  height: 21px;
  border: 1px solid #ababab;
  background: #fff;
}
.vscroll .arrow {
  border-left-width: 5px;
  border-right-width: 5px;
}
.track {
  flex: 1;
  background: #dadada;
}
.thumb {
  border: 1px solid #ababab;
  background: #fff;
}
.vscroll .thumb {
  height: 82px;
}

.sheettabs {
  display: flex;
  flex: none;
  height: 40px;
  padding-right: 30px;
}
.nav {
  display: flex;
  align-items: center;
  gap: 35px;
  width: 136px;
  padding-left: 32px;
  color: #bbb;
}
.sheettab {
  width: 93px;
  height: 34px;
  border: 1px solid #9b9b9b;
  border-top: none;
  border-bottom: 3px solid #217346;
  background: #fff;
  color: #217346;
  font-size: 17px;
}
.hscroll {
  display: flex;
  flex: 1;
  height: 21px;
  margin: 10px 0 0 400px;
}
.hscroll .thumb {
  width: 82%;
  height: 21px;
}

.status {
  display: flex;
  align-items: center;
  flex: none;
  height: 29px;
  padding: 0 27px 0 5px;
  border-top: 1px solid #c6c6c6;
  background: #f1f1f1;
}
.status span + svg {
  margin-left: 28px;
}
.zoom {
  appearance: none;
  width: 140px;
  height: 9px;
  margin: 0 6px 0 auto;
  background: linear-gradient(#aaa, #aaa) center / 1px 9px no-repeat, linear-gradient(#aaa, #aaa) center / 100% 1px no-repeat;
}
.zoom::-webkit-slider-thumb {
  appearance: none;
  width: 0;
}
.percent {
  margin-left: 20px;
  color: #aaa;
}

/* Symbol dialog */
.dialog {
  position: absolute;
  top: 152px;
  left: 237px;
  width: 775px;
  border: 1px solid #6e6e6e;
  background: #f0f0f0;
  box-shadow: 0 6px 28px rgba(0, 0, 0, 0.5);
  color: #000;
}
.dialog-title {
  display: flex;
  align-items: center;
  height: 42px;
  padding: 0 0 2px 12px;
  background: #fff;
}
.dialog-title h2 {
  flex: 1;
}
.dialog-title button {
  display: flex;
  align-items: center;
  justify-content: center;
  width: 64px;
}
.dialog-title .help {
  font-size: 20px;
}
.dialog-tabs {
  display: flex;
  align-items: flex-end;
  padding: 12px 0 0 9px;
}
.dialog-tabs button {
  height: 32px;
  padding: 0 11px;
  border: 1px solid #dcdcdc;
  border-left: none;
  border-bottom: none;
}
.dialog-tabs .active {
  position: relative;
  height: 35px;
  margin-bottom: -1px;
  padding: 0 14px 0 12px;
  border-left: 1px solid #dcdcdc;
  background: #fff;
}
.panel {
  margin: 0 12px 0 9px;
  padding: 16px 9px 10px 12px;
  border: 1px solid #dcdcdc;
  background: #fff;
}
.font-row {
  position: relative;
  display: flex;
  align-items: center;
  gap: 4px;
  width: 371px;
}
.font-row::after {
  content: "";
  position: absolute;
  inset: -11px -8px -8px;
  border: 8px solid #f00;
  pointer-events: none;
}
.select {
  position: relative;
  flex: 1;
  height: 31px;
  border: 1px solid #828790;
}
.select select {
  appearance: none;
  width: 100%;
  height: 100%;
  padding: 0 30px 0 3px;
}
.drop {
  position: absolute;
  top: 0;
  right: 0;
  display: flex;
  align-items: center;
  justify-content: center;
  width: 23px;
  height: 100%;
  border: 1px solid #adadad;
  background: #e1e1e1;
  color: #555;
  pointer-events: none;
}
.picker {
  display: flex;
  width: 705px;
  height: 187px;
  margin-top: 8px;
}
.symbols, .recent {
  display: grid;
  grid-template-columns: repeat(16, 1fr);
  border: 1px solid #828790;
}
.symbols {
  flex: 1;
  grid-template-rows: repeat(4, 1fr);
  padding: 1px 0 2px 1px;
  border-right: none;
}
.cell {
  min-width: 0;
  overflow: hidden;
  border-right: 1px solid #000;
  font-family: "Noto Sans CJK KR", sans-serif;
  font-size: 35px;
  font-weight: 400;
  line-height: 46px;
}
.cell svg {
  width: 42px;
  height: 45px;
  stroke-width: 3;
}
.symbols .cell {
  border-bottom: 1px solid #000;
}
.cell:nth-child(16n) {
  border-right: none;
}
.cell.selected {
  outline: 1px dotted #e08a3c;
  outline-offset: -1px;
  background: #0078d7;
  color: #fff;
}
.scroll {
  display: flex;
  flex-direction: column;
  width: 22px;
  background: #f0f0f0;
  color: #555;
}
.scroll button {
  padding: 7px 5px;
}
.scroll .thumb {
  height: 24px;
  border: none;
  background: #cdcdcd;
}
.scroll .down {
  margin-top: auto;
  padding: 6px 5px;
}
.recent-label {
  margin-top: 15px;
}
.recent {
  width: 685px;
  height: 50px;
  margin-top: 5px;
  padding: 1px;
}
.info {
  display: flex;
  align-items: center;
  margin-top: 9px;
}
.name {
  flex: 1;
  line-height: 33px;
}
.info input {
  width: 69px;
  height: 33px;
  margin: 0 13px 0 4px;
  padding: 0 4px;
  border: 1px solid #828790;
}
.base {
  flex: none;
  width: 178px;
  height: 35px;
  margin-left: 4px;
}
.base select {
  padding-left: 6px;
}
.actions {
  display: flex;
  justify-content: flex-end;
  gap: 14px;
  padding: 14px 10px 13px;
}
.actions button {
  width: 105px;
  height: 35px;
  border: 1px solid #adadad;
  background: #e1e1e1;
}
.actions .primary {
  border: 2px solid #0078d7;
  background: #e5f1fb;
}
.grip {
  position: absolute;
  right: 0;
  bottom: 0;
}
.cursor {
  position: absolute;
  right: 198px;
  bottom: 2px;
}
```
